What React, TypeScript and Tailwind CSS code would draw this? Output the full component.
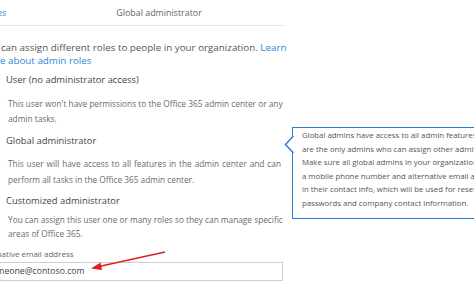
import React from "react";

const options = [
  {
    title: "User (no administrator access)",
    lines: [
      "This user won't have permissions to the Office 365 admin center or any",
      "admin tasks.",
    ],
    titleGap: "mt-[6.5px]",
    descGap: "mt-[8.5px]",
    leading: "leading-[15px]",
  },
  {
    title: "Global administrator",
    lines: [
      "This user will have access to all features in the admin center and can",
      "perform all tasks in the Office 365 admin center.",
    ],
    justify: true,
    titleGap: "mt-[8.5px]",
    descGap: "mt-[7.5px]",
    leading: "leading-[16.5px]",
  },
  {
    title: "Customized administrator",
    lines: [
      "You can assign this user one or many roles so they can manage specific",
      "areas of Office 365.",
    ],
    titleGap: "mt-[5.5px]",
    descGap: "mt-[5px]",
    leading: "leading-[13.5px]",
  },
];

export default function App() {
  return (
    <div
      className="relative w-[474px] h-[286px] overflow-hidden bg-white text-[#555] whitespace-nowrap"
      style={{ fontFamily: '"Open Sans", "Noto Sans", sans-serif' }}
    >
      {/* Header row */}
      <div className="flex items-center h-[26px] w-[285px] border-b border-[#e6e6e6] text-[8.9px]">
        <span className="-ml-[16px] text-[#2b88d8]">Roles</span>
        <span className="ml-[110px] text-[#666]">Global administrator</span>
      </div>

      {/* Left column */}
      <div className="w-[310px] -ml-[24px]">
        <p className="mt-[14.5px] ml-[5px] text-[9.8px] leading-[13px] text-[#555]">
          You can assign different roles to people in your organization.{" "}
          <span className="text-[#2b88d8]">Learn</span>
          <br />
          <span className="text-[#2b88d8]">more about admin roles</span>
        </p>

        <div className="ml-[30px] w-[276px]">
          {options.map((o, i) => (
            <div key={i} className={o.titleGap}>
              <div className="text-[9.4px] leading-[14px] text-[#444]">{o.title}</div>
              <div className={`${o.descGap} ml-[2px] text-[8.3px] ${o.leading} text-[#6a6a6a]`}>
                {o.lines.map((l, j) => (
                  <div
                    key={j}
                    className={
                      o.justify && j === 0
                        ? "w-[273px] whitespace-normal text-justify [text-align-last:justify]"
                        : ""
                    }
                  >
                    {l}
                  </div>
                ))}
              </div>
            </div>
          ))}
        </div>

        <div className="mt-[8px] ml-[3px] text-[8px] leading-[12px] text-[#666]">
          Alternative email address
        </div>
        <div className="mt-[2px] -ml-[6px] w-[313px] h-[19px] border border-[#cfcfcf] flex items-center pl-[16px] text-[8.7px] text-[#444]">
          someone@contoso.com
        </div>
      </div>

      {/* Tooltip callout */}
      <div className="absolute left-[292px] top-[127px] w-[200px] h-[92px] border-[1.5px] border-[#2b7cd3] bg-white pl-[9px] pt-[1px] text-[7.8px] leading-[13.6px] text-[#555]">
        <div>Global admins have access to all admin features. They</div>
        <div>are the only admins who can assign other admin roles.</div>
        <div>Make sure all global admins in your organization have</div>
        <div>a mobile phone number and alternative email address</div>
        <div>in their contact info, which will be used for resetting</div>
        <div>passwords and company contact information.</div>
      </div>
      <svg className="absolute left-[284px] top-[136px]" width="10" height="18" viewBox="0 0 10 18">
        <path d="M9.5 0 L1.5 8.5 L9.5 17" fill="white" stroke="#2b7cd3" strokeWidth="1.5" />
      </svg>

      {/* Red arrow */}
      <svg className="absolute left-0 top-0 pointer-events-none" width="474" height="286">
        <line x1="165" y1="252" x2="99" y2="266.5" stroke="#e0201b" strokeWidth="1.6" />
        <path d="M91 268.5 L100.5 262.5 L102 270 Z" fill="#e0201b" />
      </svg>
    </div>
  );
}
